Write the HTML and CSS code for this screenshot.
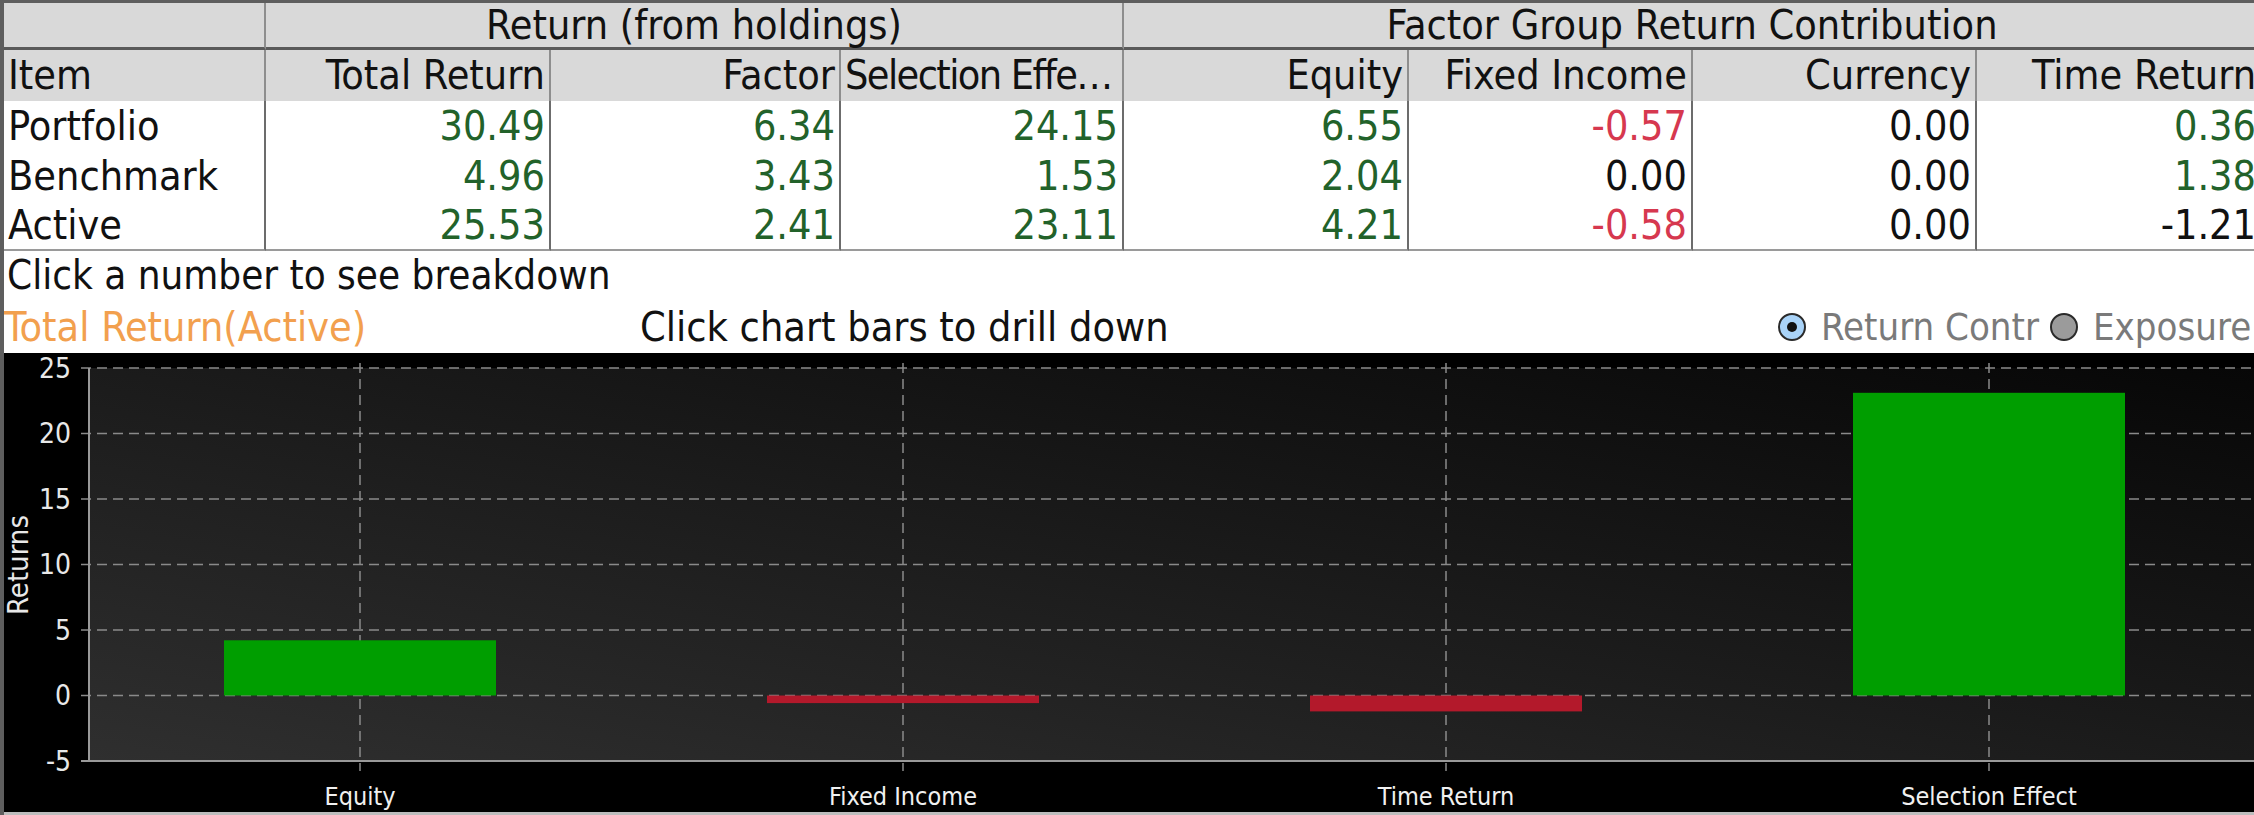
FILE: index.html
```html
<!DOCTYPE html>
<html lang="en">
<head>
  <meta charset="UTF-8">
  <title>Return Attribution</title>
  <link rel="stylesheet" href="styles.css">
</head>
<body>
  <div class="screen">
    <table class="attrib">
      <colgroup>
        <col class="w-item">
        <col class="w-total">
        <col class="w-factor">
        <col class="w-sel">
        <col class="w-eq">
        <col class="w-fi">
        <col class="w-cur">
        <col class="w-time">
      </colgroup>
      <thead>
        <tr class="group-row">
          <th></th>
          <th colspan="3">Return (from holdings)</th>
          <th colspan="4">Factor Group Return Contribution</th>
        </tr>
        <tr class="head-row">
          <th class="left">Item</th>
          <th>Total Return</th>
          <th>Factor</th>
          <th class="left tight">Selection Effe…</th>
          <th>Equity</th>
          <th>Fixed Income</th>
          <th>Currency</th>
          <th>Time Return</th>
        </tr>
      </thead>
      <tbody>
        <tr>
          <td class="left">Portfolio</td>
          <td class="pos">30.49</td>
          <td class="pos">6.34</td>
          <td class="pos">24.15</td>
          <td class="pos">6.55</td>
          <td class="neg">-0.57</td>
          <td>0.00</td>
          <td class="pos">0.36</td>
        </tr>
        <tr>
          <td class="left">Benchmark</td>
          <td class="pos">4.96</td>
          <td class="pos">3.43</td>
          <td class="pos">1.53</td>
          <td class="pos">2.04</td>
          <td>0.00</td>
          <td>0.00</td>
          <td class="pos">1.38</td>
        </tr>
        <tr>
          <td class="left">Active</td>
          <td class="pos">25.53</td>
          <td class="pos">2.41</td>
          <td class="pos">23.11</td>
          <td class="pos">4.21</td>
          <td class="neg">-0.58</td>
          <td>0.00</td>
          <td>-1.21</td>
        </tr>
      </tbody>
    </table>

    <div class="note">Click a number to see breakdown</div>

    <div class="chart-head">
      <span class="chart-title">Total Return(Active)</span>
      <span class="chart-hint">Click chart bars to drill down</span>
      <div class="modes">
        <label class="mode first"><span class="radio on"></span>Return Contr</label>
        <label class="mode"><span class="radio"></span>Exposure</label>
      </div>
    </div>

    <!-- bar chart: 13.1px per unit, zero line at y=342.5 -->
    <div class="chart">
      <svg width="2254" height="459" viewBox="0 0 2254 459">
        <defs>
          <linearGradient id="plotbg" x1="0" y1="1" x2="1" y2="0">
            <stop offset="0" stop-color="#2f2f2f"/>
            <stop offset="1" stop-color="#070707"/>
          </linearGradient>
        </defs>
        <rect x="85" y="15" width="2169" height="393" fill="url(#plotbg)"/>

        <g class="grid">
          <line x1="77" y1="15" x2="2254" y2="15"/>
          <line x1="77" y1="80.5" x2="2254" y2="80.5"/>
          <line x1="77" y1="146" x2="2254" y2="146"/>
          <line x1="77" y1="211.5" x2="2254" y2="211.5"/>
          <line x1="77" y1="277" x2="2254" y2="277"/>
          <line x1="77" y1="342.5" x2="2254" y2="342.5"/>
          <line x1="356" y1="10" x2="356" y2="418"/>
          <line x1="899" y1="10" x2="899" y2="418"/>
          <line x1="1442" y1="10" x2="1442" y2="418"/>
          <line x1="1985" y1="10" x2="1985" y2="418"/>
        </g>

        <line class="axis" x1="85" y1="15" x2="85" y2="408"/>
        <line class="axis" x1="77" y1="408" x2="2254" y2="408"/>

        <g class="bars">
          <rect class="up" x="220" y="287.3" width="272" height="55.2"/>
          <rect class="down" x="763" y="342.5" width="272" height="7.6"/>
          <rect class="down" x="1306" y="342.5" width="272" height="15.9"/>
          <rect class="up" x="1849" y="39.8" width="272" height="302.7"/>
        </g>

        <g class="ticks">
          <text x="67" y="15" dy=".35em">25</text>
          <text x="67" y="80.5" dy=".35em">20</text>
          <text x="67" y="146" dy=".35em">15</text>
          <text x="67" y="211.5" dy=".35em">10</text>
          <text x="67" y="277" dy=".35em">5</text>
          <text x="67" y="342.5" dy=".35em">0</text>
          <text x="67" y="408" dy=".35em">-5</text>
        </g>

        <text class="y-title" transform="translate(14,212) rotate(-90)" dy=".35em">Returns</text>

        <g class="cats">
          <text x="356" y="452">Equity</text>
          <text x="899" y="452">Fixed Income</text>
          <text x="1442" y="452">Time Return</text>
          <text x="1985" y="452">Selection Effect</text>
        </g>
      </svg>
    </div>
  </div>
</body>
</html>
```

FILE: styles.css
```css
body {
  margin: 0;
  background: #fff;
  font-family: 'DejaVu Sans Condensed', 'DejaVu Sans', sans-serif;
  font-stretch: condensed;
  color: #111;
  overflow: hidden;
}
.screen {
  width: 2250px;
  height: 812px;
  border-top: 3px solid #5e5e5e;
  border-left: 4px solid #5e5e5e;
  overflow: hidden;
}

/* table */
.attrib {
  width: 2258px;
  table-layout: fixed;
  border-collapse: separate;
  border-spacing: 0;
  font-size: 41px;
}
.w-item { width: 262px; }
.w-total { width: 285px; }
.w-factor { width: 290px; }
.w-sel { width: 283px; }
.w-eq { width: 285px; }
.w-fi { width: 284px; }
.w-cur { width: 284px; }
.w-time { width: 285px; }

th, td {
  padding: 0 4px;
  text-align: right;
  white-space: nowrap;
  font-weight: normal;
}
th {
  background: #d9d9d9;
  border-right: 2px solid #8e8e8e;
}
td {
  border-right: 2px solid #6c6c6c;
  line-height: 50px;
}
.left { text-align: left; }
.tight { letter-spacing: -1.6px; }
.group-row th {
  text-align: center;
  line-height: 44px;
  border-bottom: 3px solid #5a5a5a;
}
.head-row th { line-height: 51px; }
tbody tr:last-child td { border-bottom: 2px solid #9a9a9a; line-height: 48px; }
.pos { color: #22622a; }
.neg { color: #d6384f; }

/* captions */
.note {
  padding-left: 3px;
  font-size: 40px;
  line-height: 49px;
}
.chart-head {
  display: flex;
  align-items: center;
  height: 53px;
  font-size: 41px;
  white-space: nowrap;
}
.chart-title {
  flex: 0 0 636px;
  color: #f2a04e;
}
.chart-hint {
  flex: 0 0 1138px;
  color: #111;
}
.modes {
  display: flex;
  flex: 0 0 auto;
  font-size: 38px;
}
.mode {
  display: flex;
  align-items: center;
  color: #7a7a7a;
}
.mode.first { flex: 0 0 272px; }
.radio {
  flex: 0 0 auto;
  width: 24px;
  height: 24px;
  margin-right: 15px;
  border: 2px solid #2a2a2a;
  border-radius: 50%;
  background: #9b9b9b;
  display: flex;
  align-items: center;
  justify-content: center;
}
.radio.on { background: #a9d3f8; }
.radio.on::after {
  content: '';
  width: 10px;
  height: 10px;
  border-radius: 50%;
  background: #111;
}

/* chart */
.chart {
  height: 459px;
  background: #000;
  border-bottom: 3px solid #bdbdbd;
}
.chart svg { display: block; }
.grid line {
  stroke: #8a8a8a;
  stroke-width: 1.5;
  stroke-dasharray: 10 6;
}
.axis {
  stroke: #9a9a9a;
  stroke-width: 2;
}
.bars .up { fill: #009e00; }
.bars .down { fill: #b3192b; }
.ticks text {
  fill: #e8e8e8;
  font-size: 28px;
  text-anchor: end;
}
.y-title {
  fill: #e8e8e8;
  font-size: 29px;
  text-anchor: middle;
}
.cats text {
  fill: #f0f0f0;
  font-size: 25px;
  text-anchor: middle;
}
```
